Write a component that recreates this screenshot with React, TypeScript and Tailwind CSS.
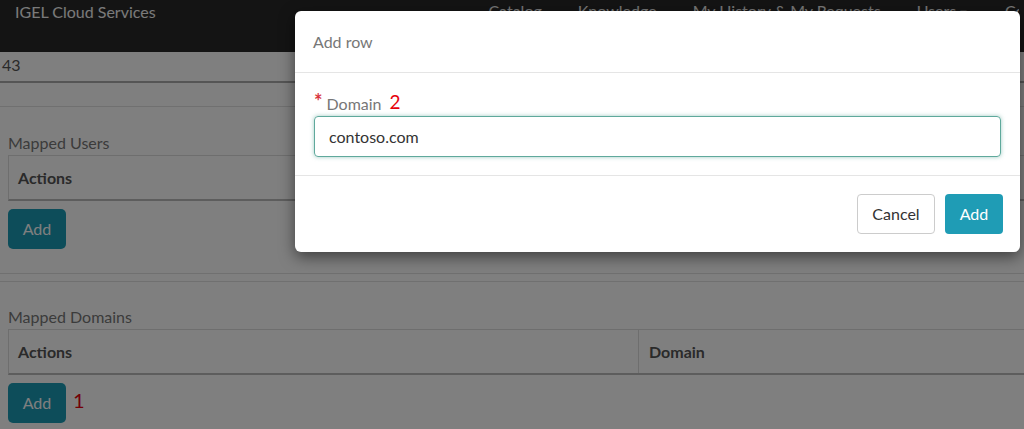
const navItems = ["Catalog", "Knowledge", "My History & My Requests"];

const Section = ({ title, showDomain, marker }: { title: string; showDomain?: boolean; marker?: string }) => (
  <div className="pl-2">
    <div className="text-[16px] text-[#777] leading-5 h-[22px]">{title}</div>
    <div className="flex h-[46px] border border-[#ddd] border-b-2 border-b-[#bbb] w-[1040px]">
      <div className="w-[629px] px-[9px] flex items-center font-bold text-[16px] text-[#555]">Actions</div>
      {showDomain && (
        <div className="flex-1 border-l border-[#ddd] px-[10px] flex items-center font-bold text-[16px] text-[#555]">
          Domain
        </div>
      )}
    </div>
    <div className="flex items-center mt-[8px]">
      <button className="w-[58px] h-10 rounded-[5px] bg-[#1a9bb5] text-white text-[16px]">Add</button>
      {marker && <span className="ml-[7px] mb-[6px] text-red-600 text-[20px] leading-none">{marker}</span>}
    </div>
  </div>
);

export default function App() {
  return (
    <div className="relative w-[1024px] h-[429px] overflow-hidden bg-white font-['Lato','Open_Sans',sans-serif]">
      <header className="h-[52px] bg-[#282828] flex items-start">
        <div className="pl-[15px] pt-[4px] text-[16px] leading-none text-[#f4f4f4]">IGEL Cloud Services</div>
        <nav className="ml-auto flex gap-[36px] pt-[3px] pr-[5px] text-[16px] leading-none text-[#eee]">
          {navItems.map((n) => (
            <span key={n}>{n}</span>
          ))}
          <span>
            Users<span className="text-[11px] ml-[2px]">▼</span>
          </span>
          <span className="w-[14px] overflow-hidden whitespace-nowrap">Co</span>
        </nav>
      </header>

      <div className="pl-[2px] text-[16px] text-[#555] pt-[1px] h-[31px] border-b-2 border-[#aaa]">43</div>
      <div className="h-[24px] border-b border-[#e0e0e0]" />
      <div className="pt-[26px]">
        <Section title="Mapped Users" />
      </div>
      <div className="mt-[24px] border-t border-[#e0e0e0] h-[8px]" />
      <div className="border-t border-[#e0e0e0] pt-[25px]">
        <Section title="Mapped Domains" showDomain marker="1" />
      </div>

      <div className="absolute inset-0 bg-black/50">
        <div className="ml-[295px] mt-[11px] w-[725px] bg-white rounded-[6px] shadow-[0_5px_15px_rgba(0,0,0,0.5)]">
          <div className="h-[62px] flex items-center px-[18px] text-[16px] text-[#777] border-b border-[#e5e5e5]">
            Add row
          </div>
          <div className="px-[19px] pt-[17px] pb-[18px] border-b border-[#e5e5e5]">
            <div className="flex items-end h-[24px] mb-[2px]">
              <span className="text-[#d9363e] text-[20px] font-bold leading-none self-start mt-[1px]">*</span>
              <span className="ml-[4px] text-[16px] text-[#777] leading-5">Domain</span>
              <span className="ml-[8px] text-red-600 text-[19px] leading-6">2</span>
            </div>
            <div className="h-[41px] rounded-[4px] border border-[#5fa99c] shadow-[0_0_4px_rgba(95,169,156,0.6)] flex items-center px-[14px] text-[16px] text-[#333]">
              contoso.com
            </div>
          </div>
          <div className="h-[76px] flex items-center justify-end gap-[10px] px-[17px]">
            <button className="w-[78px] h-[40px] rounded-[4px] border border-[#ccc] text-[16px] text-[#333]">Cancel</button>
            <button className="w-[58px] h-[40px] rounded-[4px] bg-[#1f9cb5] text-[16px] text-white">Add</button>
          </div>
        </div>
      </div>
    </div>
  );
}
